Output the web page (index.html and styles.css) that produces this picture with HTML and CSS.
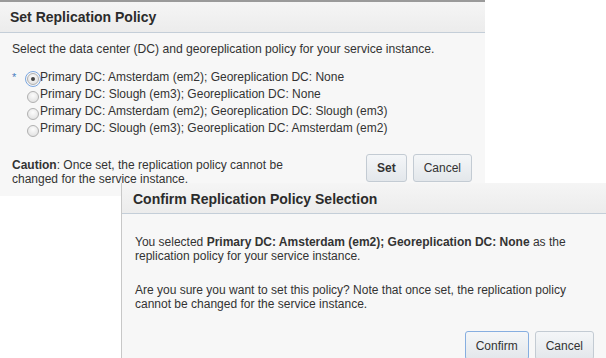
FILE: index.html
```html
<!DOCTYPE html>
<html lang="en">
  <head>
    <meta charset="UTF-8" />
    <title>Set Replication Policy</title>
    <link rel="stylesheet" href="styles.css">
  </head>
  <body>
    <div class="dialog policy-dialog">
      <div class="dialog-header">Set Replication Policy</div>
      <div class="dialog-body">
        <p class="intro">Select the data center (DC) and georeplication policy for your service instance.</p>
        <div class="choices">
          <span class="required">*</span>
          <div class="radio-list">
            <label class="radio-row"><span class="radio checked focused"></span>Primary DC: Amsterdam (em2); Georeplication DC: None</label>
            <label class="radio-row"><span class="radio"></span>Primary DC: Slough (em3); Georeplication DC: None</label>
            <label class="radio-row"><span class="radio"></span>Primary DC: Amsterdam (em2); Georeplication DC: Slough (em3)</label>
            <label class="radio-row"><span class="radio"></span>Primary DC: Slough (em3); Georeplication DC: Amsterdam (em2)</label>
          </div>
        </div>
        <div class="footer">
          <p class="caution"><b>Caution</b>: Once set, the replication policy cannot be changed for the service instance.</p>
          <div class="buttons">
            <button class="btn btn-default">Set</button>
            <button class="btn">Cancel</button>
          </div>
        </div>
      </div>
    </div>

    <div class="dialog confirm-dialog">
      <div class="dialog-header">Confirm Replication Policy Selection</div>
      <div class="dialog-body">
        <p>You selected <b>Primary DC: Amsterdam (em2); Georeplication DC: None</b> as the replication policy for your service instance.</p>
        <p>Are you sure you want to set this policy? Note that once set, the replication policy cannot be changed for the service instance.</p>
        <div class="buttons confirm-buttons">
          <button class="btn btn-focus">Confirm</button>
          <button class="btn">Cancel</button>
        </div>
      </div>
    </div>
  </body>
</html>
```

FILE: styles.css
```css
body {
    margin: 0;
    background-color: #fff;
    font-family: "Liberation Sans", Arial, sans-serif;
    font-size: 12px;
    color: #333;
    width: 606px;
    height: 358px;
    position: relative;
    overflow: hidden;
}
p {
    margin: 0;
}
.dialog {
    background-color: #f7f7f7;
    display: flex;
    flex-direction: column;
}
.dialog-header {
    background: linear-gradient(#f5f5f5, #ececec);
    border-bottom: 1px solid #c4ced8;
    font-weight: bold;
    font-size: 14px;
    color: #2b2b2b;
    height: 30px;
    line-height: 30px;
    box-sizing: border-box;
}
.policy-dialog {
    width: 485px;
    height: 196px;
    border-top: 2px solid #9a9a9a;
    box-sizing: border-box;
}
.policy-dialog .dialog-header {
    padding-left: 10px;
    height: 31px;
    line-height: 30px;
}
.policy-dialog .dialog-body {
    padding: 9px 12px 0 12px;
    flex: 1;
    display: flex;
    flex-direction: column;
}
.intro {
    line-height: 15px;
    font-size: 12.15px;
}
.choices {
    display: flex;
    margin-top: 12px;
}
.required {
    color: #4a7ec0;
    width: 15px;
    font-size: 11px;
    padding-top: 2px;
}
.radio-list {
    display: flex;
    flex-direction: column;
}
.radio-row {
    display: flex;
    align-items: center;
    height: 17px;
    line-height: 17px;
}
.radio {
    width: 12px;
    height: 12px;
    border-radius: 50%;
    border: 1px solid #b0b0b0;
    background: radial-gradient(circle at 50% 35%, #fcfcfc, #dcdcdc);
    box-sizing: border-box;
    margin-right: 1px;
    margin-top: 5px;
    position: relative;
}
.radio.checked::after {
    content: "";
    position: absolute;
    left: 3px;
    top: 3px;
    width: 4px;
    height: 4px;
    border-radius: 50%;
    background-color: #444;
}
.radio.focused {
    outline: 1px solid #7aa6e0;
    outline-offset: 1px;
    margin-top: 2px;
}
.footer {
    display: flex;
    justify-content: space-between;
    align-items: flex-start;
    margin-top: 21px;
}
.caution {
    width: 300px;
    line-height: 14px;
}
.buttons {
    display: flex;
    gap: 6px;
    margin-top: -4px;
    margin-right: 1px;
}
.btn {
    font-family: "Liberation Sans", Arial, sans-serif;
    font-size: 12px;
    color: #333;
    background: linear-gradient(#f4f6f8, #e3e7eb);
    border: 1px solid #c3cbd3;
    border-radius: 3px;
    height: 28px;
    padding: 0 10px;
}
.btn-default {
    font-weight: bold;
}
.btn-focus {
    border-color: #86aee0;
}
.confirm-dialog {
    position: absolute;
    left: 121px;
    top: 183px;
    width: 485px;
    height: 175px;
    border-left: 1px solid #c8c8c8;
    box-sizing: border-box;
}
.confirm-dialog .dialog-header {
    padding-left: 11px;
    height: 31px;
    line-height: 32px;
}
.confirm-dialog .dialog-body {
    padding: 21px 12px 0 13px;
    flex: 1;
    display: flex;
    flex-direction: column;
}
.confirm-dialog p {
    line-height: 14px;
    margin-bottom: 20px;
}
.confirm-buttons {
    justify-content: flex-end;
    margin-top: 0;
    margin-right: 0;
}
.confirm-buttons .btn {
    height: 29px;
}
```
